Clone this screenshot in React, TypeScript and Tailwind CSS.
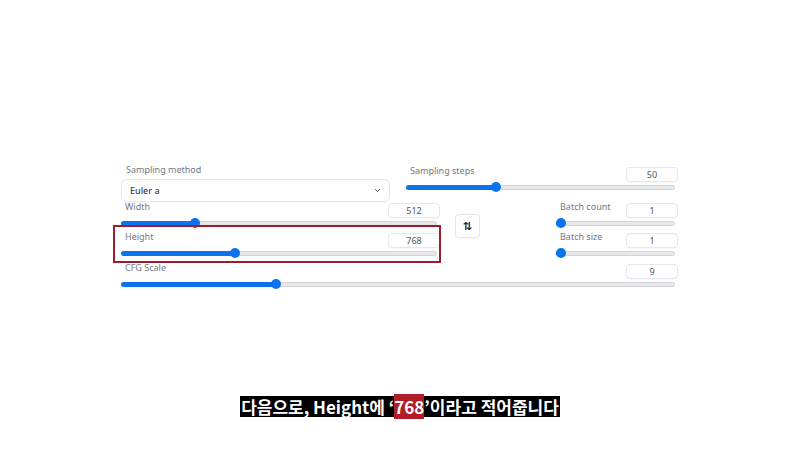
import React from 'react';

type SliderProps = { value: number; min: number; max: number };

function Slider({ value, min, max }: SliderProps) {
  const pct = (value - min) / (max - min);
  return (
    <div className="relative h-[10px] mr-[3px]">
      <div className="absolute left-0 right-0 top-[2.5px] h-[5px] rounded-full bg-[#e8e8ea] border border-[#d4d4d8]" />
      <div
        className="absolute left-0 top-[2.5px] h-[5px] rounded-full bg-[#0b72f0]"
        style={{ width: `calc(5px + (100% - 10px) * ${pct})` }}
      />
      <div
        className="absolute top-0 w-[10px] h-[10px] rounded-full bg-[#0b72f0]"
        style={{ left: `calc((100% - 10px) * ${pct})` }}
      />
    </div>
  );
}

type FieldProps = { label: string; value: number; min: number; max: number };

function SliderField({ label, value, min, max }: FieldProps) {
  return (
    <div className="flex flex-col">
      <div className="flex h-[15px] items-start justify-between">
        <span className="pl-[4px] -mt-[1px] text-[9px] leading-[10px] text-[#737880]">{label}</span>
        <div className="w-[52px] h-[15px] rounded-[4px] border border-[#e5e7eb] bg-white flex items-center justify-center text-[9px] text-[#4b5563] shadow-[0_1px_1px_rgba(0,0,0,0.03)]">
          {value}
        </div>
      </div>
      <Slider value={value} min={min} max={max} />
    </div>
  );
}

export default function App() {
  return (
    <div className="relative w-[800px] h-[450px] bg-white overflow-hidden font-['Noto_Sans',sans-serif]">
      <div className="ml-[121px] w-[557px] pt-[165px] flex flex-col">
        {/* row 1 */}
        <div className="flex gap-[16px] h-[37px]">
          <div className="w-[269px] flex flex-col">
            <span className="pl-[5px] text-[9px] leading-[10px] text-[#737880]">Sampling method</span>
            <div className="mt-[4px] h-[23px] rounded-[6px] border border-[#e5e7eb] bg-white shadow-[0_1px_2px_rgba(0,0,0,0.04)] flex items-center justify-between pl-[8px] pr-[7px]">
              <span className="text-[9px] font-medium text-[#374151]">Euler a</span>
              <svg width="9" height="9" viewBox="0 0 24 24" fill="none" stroke="#4b5563" strokeWidth="2.5" strokeLinecap="round" strokeLinejoin="round">
                <path d="M6 9l6 6 6-6" />
              </svg>
            </div>
          </div>
          <div className="flex-1 pt-[2px]">
            <SliderField label="Sampling steps" value={50} min={1} max={150} />
          </div>
        </div>

        {/* row 2 */}
        <div className="flex mt-[1px]">
          <div className="relative w-[319px] flex flex-col gap-[5px]">
            <SliderField label="Width" value={512} min={64} max={2048} />
            <SliderField label="Height" value={768} min={64} max={2048} />
            <div className="absolute left-[-8px] top-[22px] w-[328px] h-[38px] border-2 border-[#9e1c2c]" />
          </div>
          <div className="ml-[15px] mt-[11px] w-[25px] h-[24px] rounded-[4px] border border-[#e5e7eb] bg-white flex items-center justify-center shadow-[0_1px_2px_rgba(0,0,0,0.04)]">
            <span className="text-[11px] font-bold leading-none text-[#1f2937] font-['DejaVu_Sans',sans-serif]">⇅</span>
          </div>
          <div className="ml-auto w-[122px] flex flex-col gap-[5px]">
            <SliderField label="Batch count" value={1} min={1} max={100} />
            <SliderField label="Batch size" value={1} min={1} max={8} />
          </div>
        </div>

        {/* row 3 */}
        <div className="mt-[6px]">
          <SliderField label="CFG Scale" value={9} min={1} max={30} />
        </div>
      </div>

      {/* subtitle */}
      <div className="absolute left-0 right-0 top-[396px] flex justify-center">
        <span className="bg-black text-white font-bold text-[17px] leading-[21px] px-[1px] tracking-[0px] font-['Noto_Sans_CJK_KR',sans-serif]">
          다음으로, Height에 ‘<span className="bg-[#b01c28]">768</span>’이라고 적어줍니다
        </span>
      </div>
    </div>
  );
}
